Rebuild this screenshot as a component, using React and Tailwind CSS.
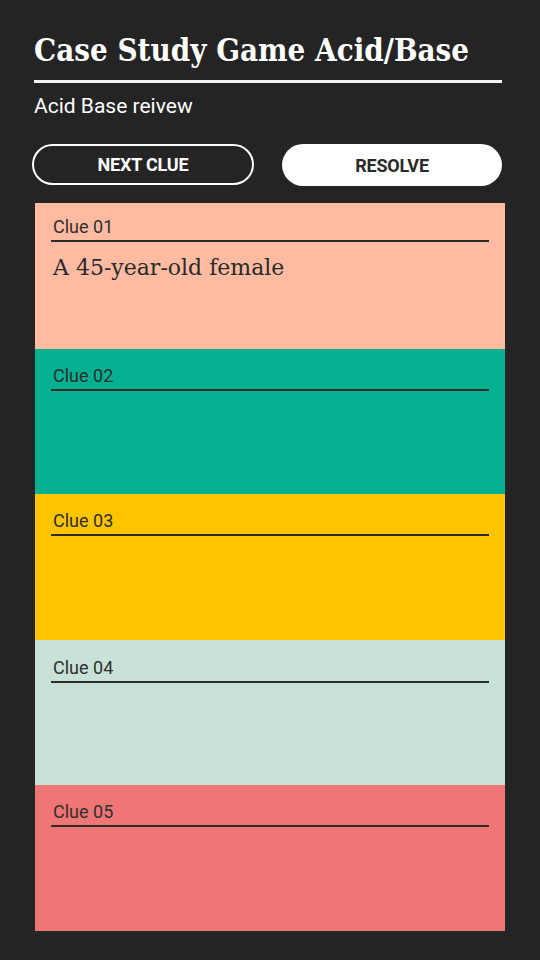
export default function App() {
  const clues = [
    { n: "01", bg: "bg-[#ffbba1]", pt: "pt-[13px]", text: "A 45-year-old female" },
    { n: "02", bg: "bg-[#03b190]", pt: "pt-[16px]", text: "" },
    { n: "03", bg: "bg-[#ffc400]", pt: "pt-[16px]", text: "" },
    { n: "04", bg: "bg-[#c9e2d8]", pt: "pt-[17px]", text: "" },
    { n: "05", bg: "bg-[#f07675]", pt: "pt-[16px]", text: "" },
  ];
  return (
    <div className="w-[540px] h-[960px] bg-[#242424] flex flex-col" style={{ fontFamily: "Roboto, 'Noto Sans', sans-serif" }}>
      <div className="px-[34px] pt-[30px]">
        <h1 className="text-white font-bold text-[31px] leading-[40px] whitespace-nowrap font-stretch-condensed" style={{ fontFamily: "'DejaVu Serif', 'Liberation Serif', serif" }}>
          Case Study Game Acid/Base
        </h1>
        <div className="mt-[10px] h-[3px] w-[468px] bg-[#f2f2f2]" />
        <p className="mt-[10px] text-white text-[21px] leading-[26px]">Acid Base reivew</p>
      </div>
      <div className="flex px-[32px] gap-[28px] mt-[25px] items-start">
        <button className="w-[222px] h-[41px] rounded-full border-2 border-white text-white font-bold text-[18px] tracking-[-0.2px]">
          NEXT CLUE
        </button>
        <button className="w-[220px] h-[42px] rounded-full bg-white text-[#2a2a2a] font-bold text-[18px] tracking-[-0.2px]">
          RESOLVE
        </button>
      </div>
      <div className="mt-[17px] ml-[35px] w-[470px] flex flex-col">
        {clues.map((c) => (
          <div key={c.n} className={`${c.bg} ${c.pt} h-[145.6px] px-[16px]`}>
            <div className="border-b-2 border-[#2b2b2b] pl-[2px] pb-[2px] text-[18px] leading-[22px] text-[#2f2f2f]">
              Clue {c.n}
            </div>
            {c.text && (
              <p className="pl-[2px] mt-[11px] text-[22px] leading-[30px] text-[#2a2a2a]" style={{ fontFamily: "'DejaVu Serif', 'Liberation Serif', serif" }}>
                {c.text}
              </p>
            )}
          </div>
        ))}
      </div>
    </div>
  );
}
